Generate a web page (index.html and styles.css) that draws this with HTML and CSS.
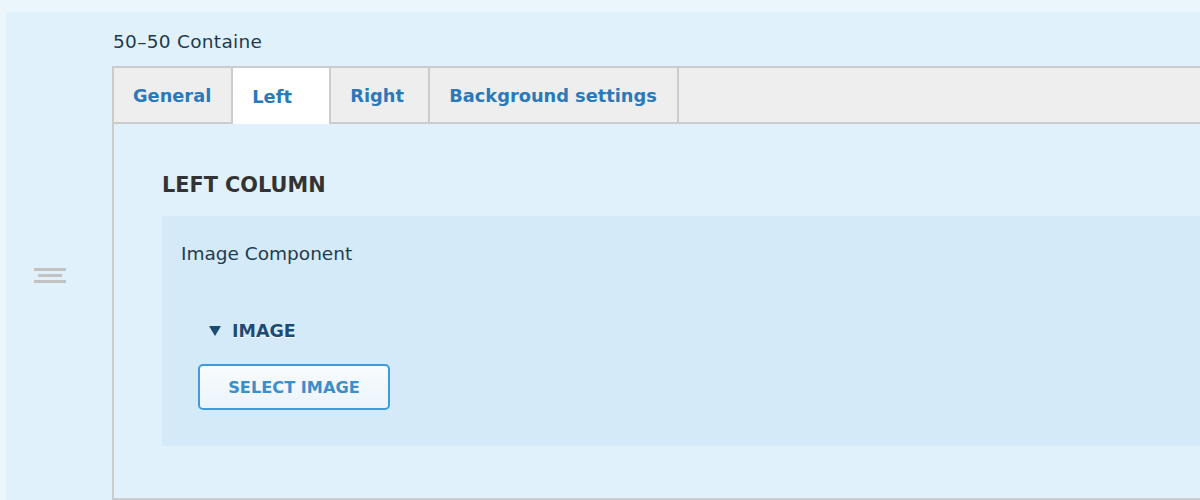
FILE: index.html
```html
<!DOCTYPE html>
<html lang="en">
<head>
<meta charset="utf-8">
<title>50-50 Container</title>
<link rel="stylesheet" href="styles.css">
</head>
<body>
<div class="row">
  <div class="handle">
    <span class="bar"></span>
    <span class="bar short"></span>
    <span class="bar"></span>
  </div>
  <div class="content">
    <div class="title">50–50 Containe</div>
    <div class="tabs">
      <a class="tab">General</a>
      <a class="tab active">Left</a>
      <a class="tab">Right</a>
      <a class="tab">Background settings</a>
    </div>
    <div class="panel">
      <h2 class="heading">LEFT COLUMN</h2>
      <div class="component">
        <div class="comp-label">Image Component</div>
        <div class="details">
          <div class="summary"><span class="tri"></span>IMAGE</div>
          <button class="select">SELECT IMAGE</button>
        </div>
      </div>
    </div>
  </div>
</div>
</body>
</html>
```
FILE: styles.css
```css
html, body {
  margin: 0;
  padding: 0;
  background: #ebf5fc;
  font-family: "DejaVu Sans", "Open Sans", sans-serif;
  overflow: hidden;
}

.row {
  margin: 12px 0 0 6px;
  background: #e1f1fb;
  display: flex;
}

.handle {
  flex: none;
  width: 106px;
  padding: 256px 0 0 28px;
  box-sizing: border-box;
  display: flex;
  flex-direction: column;
  align-items: flex-start;
  align-self: flex-start;
  gap: 3px;
}

.bar {
  display: block;
  width: 32px;
  height: 3px;
  background: #c2c2c2;
}

.bar.short {
  width: 24px;
  margin-left: 4px;
}

.content {
  flex: 1;
  min-width: 0;
}

.title {
  padding: 18px 0 0 1px;
  font-size: 18.5px;
  letter-spacing: 0.3px;
  line-height: 24px;
  color: #1f3a4c;
  box-sizing: border-box;
  height: 54px;
}

.tabs {
  display: flex;
  background: #eeeeee;
  border: 2px solid #cccccc;
  border-right: none;
  height: 54px;
}

.tab {
  display: flex;
  align-items: center;
  padding: 0 20px 0 19px;
  min-width: 99px;
  box-sizing: border-box;
  border-right: 2px solid #cccccc;
  font-size: 17.8px;
  font-weight: bold;
  color: #2a79b9;
}

.tab.active {
  background: #ffffff;
  margin-bottom: -2px;
  position: relative;
  min-width: 98px;
}

.panel {
  border-left: 2px solid #cccccc;
  border-bottom: 2px solid #cccccc;
  padding: 48px 0 52px 48px;
  height: 376px;
  box-sizing: border-box;
}

.heading {
  margin: 0 0 18px;
  font-size: 20.8px;
  line-height: 26px;
  font-weight: bold;
  color: #333333;
}

.component {
  background: #d5eaf8;
  padding: 26px 0 36px 19px;
}

.comp-label {
  font-size: 18.5px;
  line-height: 24px;
  color: #1d3c50;
}

.details {
  margin: 54px 0 0 17px;
}

.summary {
  display: flex;
  align-items: center;
  font-size: 17.5px;
  line-height: 22px;
  font-weight: bold;
  color: #1c4b73;
  text-shadow: 0 1px 0 #ffffff;
  padding-left: 11px;
}

.tri {
  width: 0;
  height: 0;
  border-left: 6px solid transparent;
  border-right: 6px solid transparent;
  border-top: 10px solid #1c4b73;
  margin-right: 11px;
}

.select {
  display: block;
  margin-top: 22px;
  width: 192px;
  height: 46px;
  border: 2px solid #3f9cdc;
  border-radius: 5px;
  background: linear-gradient(#f8fbfe, #ebf4fb);
  font-family: "DejaVu Sans", "Open Sans", sans-serif;
  font-size: 16.2px;
  font-weight: bold;
  color: #3a8ec9;
  padding: 0;
}
```
